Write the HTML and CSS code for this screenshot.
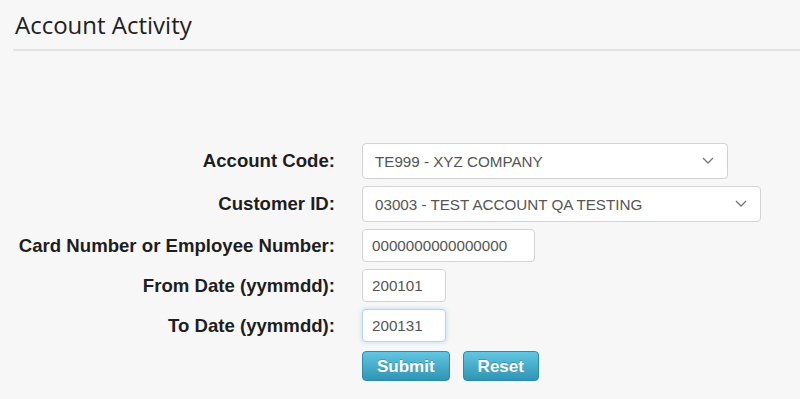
FILE: index.html
```html
<!DOCTYPE html>
<html lang="en">
<head>
    <meta charset="UTF-8">
    <meta name="viewport" content="width=device-width, initial-scale=1.0">
    <title>Account Activity</title>
    <link rel="stylesheet" href="styles.css">
</head>
<body>
    <div class="page">
        <div class="page-header">
            <h1>Account Activity</h1>
        </div>

        <form class="activity-form" onsubmit="return false;">
            <label class="form-label" for="account-code">Account Code:</label>
            <div class="select-wrap select-account">
                <select id="account-code" class="form-select">
                    <option>TE999 - XYZ COMPANY</option>
                </select>
                <svg class="chevron" width="12" height="7" viewBox="0 0 12 7"><path d="M1 1l5 5 5-5" fill="none" stroke="#777" stroke-width="1.3"/></svg>
            </div>

            <label class="form-label" for="customer-id">Customer ID:</label>
            <div class="select-wrap select-customer">
                <select id="customer-id" class="form-select">
                    <option>03003 - TEST ACCOUNT QA TESTING</option>
                </select>
                <svg class="chevron" width="12" height="7" viewBox="0 0 12 7"><path d="M1 1l5 5 5-5" fill="none" stroke="#777" stroke-width="1.3"/></svg>
            </div>

            <label class="form-label" for="card-number">Card Number or Employee Number:</label>
            <input type="text" id="card-number" class="form-input input-card" value="0000000000000000">

            <label class="form-label" for="from-date">From Date (yymmdd):</label>
            <input type="text" id="from-date" class="form-input input-date" value="200101">

            <label class="form-label" for="to-date">To Date (yymmdd):</label>
            <input type="text" id="to-date" class="form-input input-date is-focused" value="200131">

            <div></div>
            <div class="form-actions">
                <button type="submit" class="btn">Submit</button>
                <button type="reset" class="btn">Reset</button>
            </div>
        </form>
    </div>
</body>
</html>
```

FILE: styles.css
```css
* {
    margin: 0;
    padding: 0;
    box-sizing: border-box;
}

body {
    font-family: "Liberation Sans", Arial, sans-serif;
    background-color: #f7f7f7;
    color: #222;
}

.page {
    width: 800px;
    height: 399px;
    overflow: hidden;
}

.page-header {
    margin-left: 13px;
    padding: 9px 0 8px 2px;
    border-bottom: 2px solid #e3e3e3;
}

.page-header h1 {
    font-family: "Open Sans", sans-serif;
    font-size: 24px;
    font-weight: normal;
    line-height: 32px;
    color: #222;
}

.activity-form {
    display: grid;
    grid-template-columns: 335px 1fr;
    column-gap: 27px;
    row-gap: 7px;
    align-items: center;
    margin-top: 92px;
}

.form-label {
    text-align: right;
    font-size: 18.6px;
    font-weight: bold;
    color: #1e1e1e;
    white-space: nowrap;
}

.select-wrap {
    position: relative;
    height: 36px;
}

.select-account {
    width: 366px;
}

.select-customer {
    width: 399px;
}

.form-select {
    -webkit-appearance: none;
    appearance: none;
    width: 100%;
    height: 100%;
    padding: 0 34px 0 12px;
    font-family: "Liberation Sans", Arial, sans-serif;
    font-size: 15.2px;
    color: #555;
    background-color: #fff;
    border: 1px solid #d2d2d2;
    border-radius: 4px;
}

.chevron {
    position: absolute;
    right: 14px;
    top: 14px;
}

.form-input {
    height: 33px;
    padding: 0 9px;
    font-family: "Liberation Sans", Arial, sans-serif;
    font-size: 15.2px;
    color: #555;
    background-color: #fff;
    border: 1px solid #d2d2d2;
    border-radius: 4px;
    outline: none;
}

.input-card {
    width: 173px;
}

.input-date {
    width: 84px;
}

.is-focused {
    border-color: #b9d3ea;
    box-shadow: 0 0 5px rgba(82, 168, 236, 0.35);
}

.form-actions {
    display: flex;
    gap: 13px;
    margin-top: 2px;
}

.btn {
    height: 30px;
    padding: 1px 14px 0;
    font-family: "Liberation Sans", Arial, sans-serif;
    font-size: 17px;
    font-weight: bold;
    color: #fff;
    text-shadow: 0 -1px 0 rgba(0, 0, 0, 0.2);
    background: linear-gradient(to bottom, #62c6e2, #2f95b3);
    border: 1px solid #2a8cab;
    border-radius: 4px;
    cursor: pointer;
}
```
